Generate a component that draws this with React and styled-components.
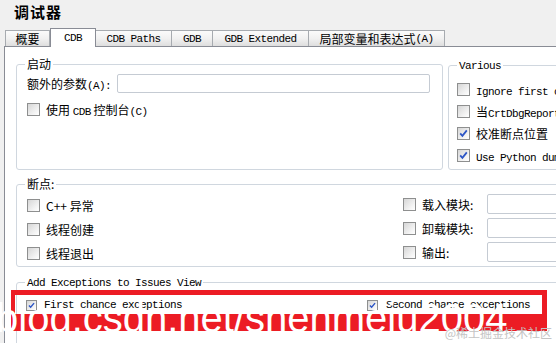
import React from "react";
import styled, { createGlobalStyle } from "styled-components";

const Global = createGlobalStyle`
  html, body {
    margin: 0;
    padding: 0;
    background: #f0f0f0;
  }
  body {
    font-family: "Noto Sans CJK SC", "Liberation Sans", sans-serif;
    font-size: 12px;
    color: #000;
  }
`;

const Page = styled.div`
  position: relative;
  width: 556px;
  height: 343px;
  overflow: hidden;
  display: flex;
  flex-direction: column;
  background: #f0f0f0;
`;

const Title = styled.div`
  flex-shrink: 0;
  height: 28px;
  padding-left: 14px;
  font-size: 15px;
  font-weight: bold;
  letter-spacing: 1px;
  line-height: 24px;
`;

const TabBar = styled.div`
  flex-shrink: 0;
  display: flex;
  align-items: flex-end;
  height: 18px;
  padding-left: 5px;
`;

const Tab = styled.div`
  box-sizing: border-box;
  position: relative;
  width: ${(p) => p.w}px;
  height: ${(p) => (p.active ? 19 : 16)}px;
  margin-bottom: ${(p) => (p.active ? -1 : 0)}px;
  border: 1px solid ${(p) => (p.active ? "#898c95" : "#a7abb0")};
  border-bottom: none;
  border-left-width: ${(p) => (p.first || p.active ? 1 : 0)}px;
  background: ${(p) =>
    p.active ? "#fff" : "linear-gradient(#fbfbfb, #f1f1f1 50%, #dedede)"};
  z-index: ${(p) => (p.active ? 2 : 1)};
  display: flex;
  align-items: center;
  justify-content: center;
  white-space: nowrap;
  line-height: 14px;
  padding-top: ${(p) => (p.active ? 0 : 1)}px;
`;

const Mono = styled.span`
  font-family: "Liberation Mono", "DejaVu Sans Mono", monospace;
  font-size: 11px;
  letter-spacing: -0.6px;
`;

const Pane = styled.div`
  flex: 1;
  min-height: 0;
  margin-left: 4px;
  background: #fff;
  border-top: 1px solid #898c95;
  border-left: 1px solid #898c95;
  padding: 10px 0 0 11px;
  display: flex;
  flex-direction: column;
  gap: 7px;
`;

const Row = styled.div`
  display: flex;
  gap: 5px;
  flex-shrink: 0;
`;

const Group = styled.fieldset`
  box-sizing: border-box;
  margin: 0;
  padding: 0 ${(p) => p.pad ?? 10}px 0;
  border: 1px solid #d0d7df;
  border-radius: 3px;
  width: ${(p) => (p.w ? `${p.w}px` : "auto")};
  height: ${(p) => (p.h ? `${p.h}px` : "auto")};
  flex-shrink: 0;
  min-width: 0;
`;

const Legend = styled.legend`
  padding: 0 2px;
  margin-left: ${(p) => p.ml ?? -2}px;
  line-height: 14px;
  white-space: nowrap;
`;

const FieldRow = styled.div`
  display: flex;
  align-items: center;
  margin-top: 3px;
`;

const FieldLabel = styled.span`
  width: 90px;
  white-space: nowrap;
`;

const TextBox = styled.div`
  box-sizing: border-box;
  width: ${(p) => p.w}px;
  height: ${(p) => p.h ?? 20}px;
  border: 1px solid #c5cbd3;
  border-radius: 2px;
  background: #fff;
  flex-shrink: 0;
`;

const Check = styled.label`
  display: flex;
  align-items: center;
  gap: ${(p) => p.gap ?? 6}px;
  height: ${(p) => p.h ?? 16}px;
  margin-top: ${(p) => p.mt ?? 0}px;
  margin-left: ${(p) => p.ml ?? 0}px;
  white-space: nowrap;
  flex-shrink: 0;
  width: ${(p) => (p.w ? `${p.w}px` : "auto")};
`;

const Box = styled.span`
  box-sizing: border-box;
  width: ${(p) => p.size}px;
  height: ${(p) => p.size}px;
  border: 1px solid #8e8f8f;
  background: linear-gradient(135deg, #d6d6d6, #f4f4f4 70%, #fff);
  display: flex;
  align-items: center;
  justify-content: center;
  flex-shrink: 0;
`;

const CheckBox = ({ checked, size = 13 }) => (
  <Box size={size}>
    {checked && (
      <svg width={size - 4} height={size - 4} viewBox="0 0 9 9">
        <path
          d="M1.2 4.4 L3.4 6.8 L7.8 1.4"
          fill="none"
          stroke="#2d56c6"
          strokeWidth="1.8"
        />
      </svg>
    )}
  </Box>
);

const List = styled.div`
  display: flex;
  flex-direction: column;
`;

const BpBody = styled.div`
  display: flex;
`;

const BpLeft = styled.div`
  width: 376px;
  display: grid;
  grid-auto-rows: 24px;
  align-items: center;
  margin-top: 2px;
`;

const BpRight = styled.div`
  display: grid;
  grid-template-columns: 84px 120px;
  grid-auto-rows: 24px;
  align-items: center;
  margin-top: 1px;
`;

const ExcRow = styled.div`
  display: flex;
  align-items: center;
  margin-top: 7px;
`;

const Highlight = styled.div`
  position: absolute;
  left: 11px;
  top: 290px;
  width: 536px;
  height: 41px;
  box-sizing: border-box;
  border-style: solid;
  border-color: #ec1c24;
  border-width: 5px 5px 17px 4px;
  pointer-events: none;
`;

const Stamp = styled.div`
  position: absolute;
  left: -4px;
  top: 296px;
  font-family: "Liberation Sans", sans-serif;
  font-size: 40px;
  line-height: 44px;
  color: #fff;
  white-space: nowrap;
  pointer-events: none;
`;

const Mark = styled.div`
  position: absolute;
  right: 4px;
  bottom: 3px;
  font-size: 12px;
  color: #c4c4c4;
  line-height: 14px;
`;

const tabs = [
  { w: 45, label: "概要", first: true },
  { w: 46, label: <Mono>CDB</Mono>, active: true },
  { w: 76, label: <Mono>CDB Paths</Mono> },
  { w: 41, label: <Mono>GDB</Mono> },
  { w: 96, label: <Mono>GDB Extended</Mono> },
  { w: 136, label: <>局部变量和表达式<Mono>(A)</Mono></> },
];

const various = [
  { label: <Mono>Ignore first chance access violations</Mono> },
  { label: <>当<Mono>CrtDbgReport()</Mono>被调用时停止</> },
  { label: "校准断点位置", checked: true },
  { label: <Mono>Use Python dumper</Mono>, checked: true },
];

export default function App() {
  return (
    <Page>
      <Global />
      <Title>调试器</Title>
      <TabBar>
        {tabs.map((t, i) => (
          <Tab key={i} w={t.w} active={t.active} first={t.first}>
            {t.label}
          </Tab>
        ))}
      </TabBar>
      <Pane>
        <Row>
          <Group w={427} h={113}>
            <Legend>启动</Legend>
            <FieldRow>
              <FieldLabel>
                额外的参数<Mono>(A):</Mono>
              </FieldLabel>
              <TextBox w={313} h={19} />
            </FieldRow>
            <Check mt={8}>
              <CheckBox />
              <span>
                使用 <Mono>CDB</Mono> 控制台<Mono>(C)</Mono>
              </span>
            </Check>
          </Group>
          <Group w={260} h={113} pad={8}>
            <Legend ml={0}>
              <Mono>Various</Mono>
            </Legend>
            <List>
              {various.map((v, i) => (
                <Check key={i} h={22} mt={i === 0 ? 5 : 0}>
                  <CheckBox checked={v.checked} />
                  <span>{v.label}</span>
                </Check>
              ))}
            </List>
          </Group>
        </Row>
        <Group w={620} h={90}>
          <Legend>断点:</Legend>
          <BpBody>
            <BpLeft>
              <Check>
                <CheckBox />
                <span>C++ 异常</span>
              </Check>
              <Check>
                <CheckBox />
                <span>线程创建</span>
              </Check>
              <Check>
                <CheckBox />
                <span>线程退出</span>
              </Check>
            </BpLeft>
            <BpRight>
              <Check>
                <CheckBox />
                <span>载入模块:</span>
              </Check>
              <TextBox w={120} />
              <Check>
                <CheckBox />
                <span>卸载模块:</span>
              </Check>
              <TextBox w={120} />
              <Check>
                <CheckBox />
                <span>输出:</span>
              </Check>
              <TextBox w={120} />
            </BpRight>
          </BpBody>
        </Group>
        <Group w={620} h={120}>
          <Legend>
            <Mono>Add Exceptions to Issues View</Mono>
          </Legend>
          <ExcRow>
            <Check w={341} gap={7} ml={-1}>
              <CheckBox checked size={11} />
              <Mono>First chance exceptions</Mono>
            </Check>
            <Check gap={8}>
              <CheckBox checked size={11} />
              <Mono>Second chance exceptions</Mono>
            </Check>
          </ExcRow>
        </Group>
      </Pane>
      <Highlight />
      <Stamp>blog.csdn.net/shenmeiu2004</Stamp>
      <Mark>@稀土掘金技术社区</Mark>
    </Page>
  );
}
